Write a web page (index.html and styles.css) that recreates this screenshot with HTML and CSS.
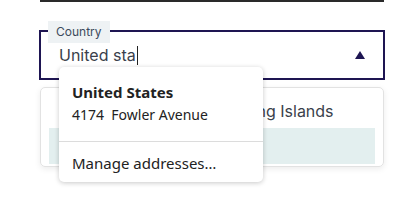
FILE: index.html
```html
<!DOCTYPE html>
<html lang="en">
<head>
<meta charset="UTF-8">
<meta name="viewport" content="width=device-width, initial-scale=1.0">
<title>Country picker</title>
<link rel="stylesheet" href="styles.css">
</head>
<body>

<div class="wrap">
  <div class="top-line"></div>

  <!-- Country field -->
  <div class="field">
    <span class="field-label">Country</span>
    <span class="field-value">United sta<span class="caret"></span></span>
    <svg class="arrow" width="10" height="8" viewBox="0 0 10 8">
      <path d="M5 0 L10 8 L0 8 Z" fill="#1e1552"/>
    </svg>
  </div>

  <!-- Suggestions list -->
  <div class="list">
    <div class="list-row">United States Minor Outlying Islands</div>
    <div class="list-row active"></div>
  </div>

  <!-- Saved address popup -->
  <div class="popup">
    <div class="popup-head">
      <div class="popup-title">United States</div>
      <div class="popup-sub">4174&nbsp; Fowler Avenue</div>
    </div>
    <div class="popup-foot">Manage addresses…</div>
  </div>
</div>

</body>
</html>
```

FILE: styles.css
```css
/* General Styling */
html, body {
  height: 100%;
}

body {
  margin: 0;
  background-color: #fff;
  font-family: Inter, "Liberation Sans", sans-serif;
  color: #333;
}

.wrap {
  position: relative;
  min-height: 100%;
  box-sizing: border-box;
  padding: 0 14px 0 39px;
}

.top-line {
  height: 2px;
  margin: 0 1px;
  background-color: #2a2a2a;
}

/* Country field */
.field {
  position: relative;
  margin-top: 28px;
  height: 46px;
  border: 2px solid #1e1552;
  display: flex;
  align-items: center;
  padding: 0 18px;
}

.field-label {
  position: absolute;
  top: -11px;
  left: 7px;
  padding: 3px 8px 4px;
  background-color: #eef2f4;
  font-size: 12px;
  color: #3d4a5c;
}

.field-value {
  flex: 1;
  font-size: 16px;
  color: #3a3f4b;
}

.caret {
  display: inline-block;
  width: 1px;
  height: 19px;
  margin-left: 1px;
  vertical-align: -4px;
  background-color: #222;
}

.arrow {
  display: block;
}

/* Suggestions list */
.list {
  margin: 7px 1px 0;
  height: 62px;
  padding: 8px 8px 8px;
  border: 1px solid #e2e2e2;
  border-radius: 5px;
  box-shadow: 0px 2px 6px rgba(0, 0, 0, 0.08);
}

.list-row {
  height: 32px;
  padding-left: 10px;
  font-size: 16px;
  line-height: 30px;
  color: #3a3f4b;
}

.list-row.active {
  height: 36px;
  background-color: #e3efef;
}

/* Saved address popup */
.popup {
  position: absolute;
  top: 67px;
  left: 59px;
  width: 204px;
  background-color: #fff;
  border-radius: 5px;
  box-shadow: 0px 1px 5px rgba(0, 0, 0, 0.22);
  font-family: "Noto Sans", sans-serif;
  color: #222;
}

.popup-head {
  padding: 14px 13px 0;
  height: 75px;
  border-bottom: 1px solid #dcdcdc;
  box-sizing: border-box;
}

.popup-title {
  font-size: 15px;
  font-weight: bold;
  line-height: 22px;
}

.popup-sub {
  font-size: 14px;
  line-height: 24px;
}

.popup-foot {
  padding: 8px 13px 0;
  height: 40px;
  box-sizing: border-box;
  font-size: 15px;
  line-height: 26px;
}
```
